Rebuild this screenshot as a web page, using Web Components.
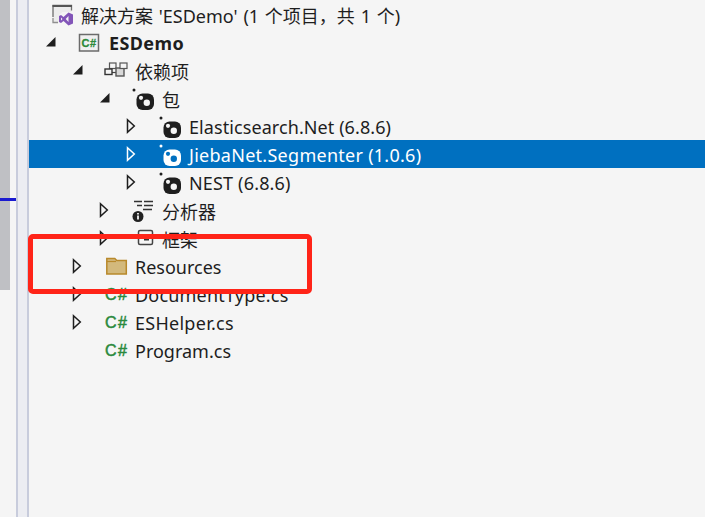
<!DOCTYPE html>
<html lang="zh">
<head>
<meta charset="utf-8">
<title>Solution Explorer</title>
<style>
  html, body { margin: 0; height: 100%; background: #f5f5f5; overflow: hidden; }
  body { font-family: "Noto Sans", "Noto Sans CJK SC", sans-serif; }
</style>
</head>
<body>
<se-window>
  <tree-row root icon="solution" style="word-spacing:1.1px">解决方案 'ESDemo' (1 个项目，共 1 个)</tree-row>
  <tree-row depth="0" arrow="open" icon="csproj" bold style="letter-spacing:.4px">ESDemo</tree-row>
  <tree-row depth="1" arrow="open" icon="deps">依赖项</tree-row>
  <tree-row depth="2" arrow="open" icon="pkg">包</tree-row>
  <tree-row depth="3" arrow="closed" icon="pkg" style="letter-spacing:.08px">Elasticsearch.Net (6.8.6)</tree-row>
  <tree-row depth="3" arrow="closed" icon="pkg" selected style="letter-spacing:.27px">JiebaNet.Segmenter (1.0.6)</tree-row>
  <tree-row depth="3" arrow="closed" icon="pkg" style="letter-spacing:.17px">NEST (6.8.6)</tree-row>
  <tree-row depth="2" arrow="closed" icon="analyzer">分析器</tree-row>
  <tree-row depth="2" arrow="closed" icon="framework">框架</tree-row>
  <tree-row depth="1" arrow="closed" icon="folder">Resources</tree-row>
  <tree-row depth="1" arrow="closed" icon="cs" style="letter-spacing:.2px">DocumentType.cs</tree-row>
  <tree-row depth="1" arrow="closed" icon="cs" style="letter-spacing:.27px">ESHelper.cs</tree-row>
  <tree-row depth="1" icon="cs">Program.cs</tree-row>
</se-window>

<script>
// 图标都画在 24x24 的格子里，currentColor 跟着选中状态变
const ICONS = {
  solution: `<svg width="24" height="24" viewBox="0 0 24 24">
    <path d="M1 3.500h18.500v6.500h-9l-3 2.500-.5 3.500v4.500h-6.500z" fill="#ececec"/>
    <path d="M1 15V3.500h18.500v5" fill="none" stroke="#6e6e6e" stroke-width="1.300"/>
    <path d="M.5 4h19.500" stroke="#555" stroke-width="2"/>
    <path d="M1 16v4.500h5" fill="none" stroke="#8f8f8f" stroke-width="1.300"/>
    <path d="M16.500 10.500l4.500 2v9l-4.500 2-5-4.500-2.500 2-2-1v-6l2-1 2.500 2zM16.500 14l-2.800 3 2.800 3zM9 15.500v3l1.500-1.500z" fill="#8255b8" fill-rule="evenodd"/>
  </svg>`,
  csproj: `<svg width="24" height="24" viewBox="0 0 24 24">
    <rect x="2.500" y="4.500" width="19" height="16.500" fill="#f0f0f0" stroke="#6b6b6b" stroke-width="1.500"/>
    <text x="12" y="16.500" text-anchor="middle" font-family="'Liberation Sans',sans-serif" font-size="11" fill="#2c8a3a" stroke="#2c8a3a" stroke-width=".3">C#</text>
  </svg>`,
  deps: `<svg width="24" height="24" viewBox="0 0 24 24">
    <path d="M8 14.500h4" stroke="#444" stroke-width="1.200"/>
    <rect x="5.500" y="5" width="6.500" height="5.500" fill="#f5f5f5" stroke="#555" stroke-width="1.200"/>
    <rect x="1" y="11" width="7" height="5.500" fill="#f5f5f5" stroke="#333" stroke-width="1.400"/>
    <rect x="12" y="10" width="8" height="8" fill="#d8d8d8" stroke="#555" stroke-width="1.400"/>
    <rect x="16" y="5" width="7" height="5.500" fill="#f5f5f5" stroke="#555" stroke-width="1.200"/>
  </svg>`,
  pkg: `<svg width="24" height="24" viewBox="0 0 24 24">
    <circle cx="3" cy="4" r="1.500" fill="currentColor"/>
    <rect x="5.500" y="7.500" width="17.500" height="16.500" rx="6" fill="currentColor"/>
    <circle cx="10" cy="11.800" r="2.100" fill="var(--pkg-hole)"/>
    <circle cx="15.800" cy="16.800" r="3.200" fill="var(--pkg-hole)"/>
  </svg>`,
  analyzer: `<svg width="24" height="24" viewBox="0 0 24 24">
    <path d="M3 3.500h8M13 3.500h9M6 7.500h5M13 7.500h9M12 11.500h9" stroke="#333" stroke-width="1.300"/>
    <circle cx="7" cy="18.500" r="5.500" fill="#222"/>
    <path d="M7 15v1.400M7 17.500v4" stroke="#f5f5f5" stroke-width="1.800"/>
  </svg>`,
  framework: `<svg width="24" height="24" viewBox="0 0 24 24">
    <path d="M2 9h3.500" stroke="#444" stroke-width="1.400"/>
    <rect x="7.500" y="4.500" width="14" height="14" rx="1.500" fill="#f5f5f5" stroke="#444" stroke-width="1.500"/>
    <rect x="13" y="10.500" width="5" height="4" fill="#333"/>
  </svg>`,
  folder: `<svg width="24" height="24" viewBox="0 0 24 24">
    <path d="M2.800 4.500h8l2 2h9.500v13.500h-19.500z" fill="#d3b97c" stroke="#b8892b" stroke-width="1.500"/>
    <path d="M3 7.500h9" stroke="#b8892b" stroke-width="1.200"/>
  </svg>`,
  cs: `<svg width="24" height="24" viewBox="0 0 24 24">
    <text x="1" y="18" font-family="'Liberation Sans',sans-serif" font-size="16" fill="#2b8a3e" stroke="#2b8a3e" stroke-width=".5" letter-spacing="1.500">C#</text>
  </svg>`,
};

const ARROWS = {
  open: `<svg width="12" height="12" viewBox="0 0 12 12"><path d="M1 10.500L10.500 1v9.500z" fill="currentColor"/></svg>`,
  closed: `<svg width="12" height="16" viewBox="0 0 12 16"><path d="M1.500 1.800L8.300 8l-6.800 6.200z" fill="none" stroke="currentColor" stroke-width="1.500"/></svg>`,
};

class SeWindow extends HTMLElement {
  constructor() {
    super();
    this.attachShadow({ mode: 'open' }).innerHTML = `
      <style>
        :host { display: flex; position: relative; height: 517px; background: #f5f5f5; color: #1e1e1e; }
        .strip { flex: none; width: 16px; background: linear-gradient(#bfc0c4, #bfc0c4) no-repeat 0 0 / 10px 290px; }
        .marker { height: 3px; margin-top: 198px; background: #1a1ad0; }
        .gutter { flex: none; box-sizing: border-box; width: 13px; background: #ecedf2; border-left: 2px solid #c8ccdc; border-right: 2px solid #c8ccdc; }
        .tree { flex: 1; min-width: 0; display: flex; flex-direction: column; }
        /* 截图上后加的红框 */
        .mark { position: absolute; left: 28px; top: 234px; width: 284px; height: 60px; box-sizing: border-box; border: 5px solid #ff2418; border-radius: 5px; }
      </style>
      <div class="strip"><div class="marker"></div></div>
      <div class="gutter"></div>
      <div class="tree"><slot></slot></div>
      <div class="mark"></div>
    `;
  }
}

class TreeRow extends HTMLElement {
  constructor() {
    super();
    this.attachShadow({ mode: 'open' });
  }

  connectedCallback() {
    const depth = Number(this.getAttribute('depth') || 0);
    const arrow = ARROWS[this.getAttribute('arrow')] || '';
    const icon = ICONS[this.getAttribute('icon')] || '';
    this.style.setProperty('--depth', depth);
    this.shadowRoot.innerHTML = `
      <style>
        :host {
          display: grid; grid-template-columns: 32px 31px 1fr; align-items: center;
          height: 28px; padding-left: calc(16px + 27px * var(--depth));
          font-size: 18px; white-space: nowrap; color: #1e1e1e; --pkg-hole: #f5f5f5;
        }
        :host([root]) { grid-template-columns: 7px 29px 1fr; }
        :host([bold]) { font-weight: 700; }
        :host([bold]) .label { padding-left: 1px; }
        :host([selected]) { background: #0070c0; color: #fff; --pkg-hole: #0070c0; }
        .arrow, .icon { display: flex; align-items: center; }
        .label { padding-top: 2px; }
        svg { display: block; }
      </style>
      <span class="arrow">${arrow}</span>
      <span class="icon">${icon}</span>
      <span class="label"><slot></slot></span>
    `;
  }
}

customElements.define('se-window', SeWindow);
customElements.define('tree-row', TreeRow);
</script>
</body>
</html>
